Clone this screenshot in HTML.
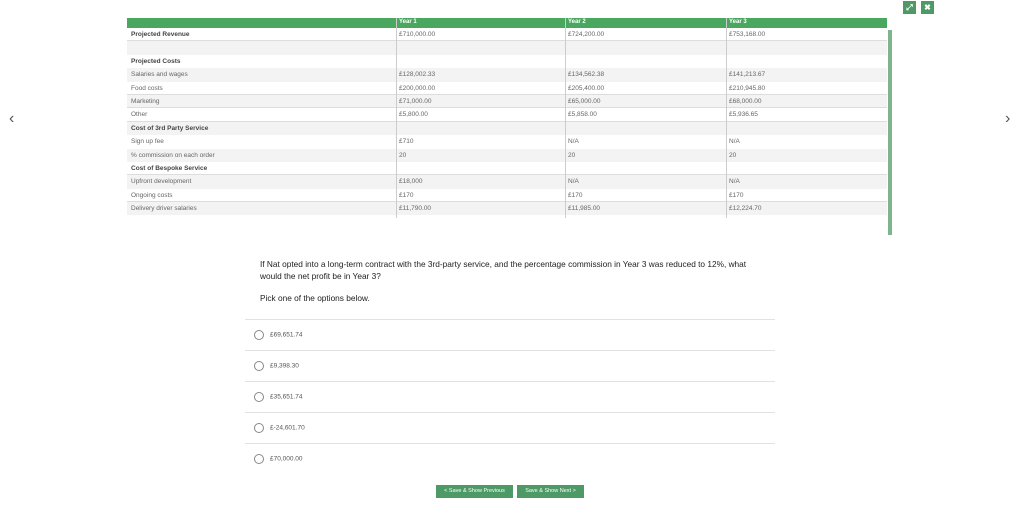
<!DOCTYPE html>
<html><head><style>
body{margin:0;width:1024px;height:514px;background:#fff;font-family:"Liberation Sans",sans-serif;position:relative;overflow:hidden;color:#333}
.tbl{position:absolute;left:127px;top:18px;width:760px}
.hdr{height:10px;background:#49a75f;position:relative}
.hdr span{position:absolute;top:0;font-size:6px;font-weight:bold;color:#fff;line-height:9px}
.row{box-sizing:border-box;height:13.4px;position:relative;font-size:6.5px;line-height:13px;color:#666}
.row:nth-child(even){background:#f3f3f3}
.row span{position:absolute;top:0}
.row b{position:absolute;left:4px;color:#444}
.vl{position:absolute;width:1px;background:#ccc;top:18px;height:200px}
.hl{border-bottom:1px solid #ddd}
.q{position:absolute;left:260px;font-size:8.3px;color:#222;line-height:11.5px;white-space:nowrap}
.line{position:absolute;left:245px;width:530px;height:1px;background:#e2e2e2}
.opt{position:absolute;left:254px;font-size:6.5px;color:#555}
.opt i{display:inline-block;width:8px;height:8px;border:1px solid #888;border-radius:50%;vertical-align:middle;margin-right:6px}
.btn{position:absolute;top:485px;height:13px;background:#4d9a66;color:#fff;font-size:5.5px;line-height:13px;text-align:center}
.ic{position:absolute;top:1px;width:13px;height:13px;background:#4d9a66;color:#fff;font-size:8px;line-height:13px;text-align:center;font-weight:bold}
</style></head><body>
<div class="tbl">
<div class="hdr"><span style="left:272px">Year 1</span><span style="left:441px">Year 2</span><span style="left:602px">Year 3</span></div>
<div>
<div class="row hl"><b>Projected Revenue</b><span style="left:272px">£710,000.00</span><span style="left:441px">£724,200.00</span><span style="left:602px">£753,168.00</span></div>
<div class="row"></div>
<div class="row"><b>Projected Costs</b></div>
<div class="row"><span style="left:4px">Salaries and wages</span><span style="left:272px">£128,002.33</span><span style="left:441px">£134,562.38</span><span style="left:602px">£141,213.67</span></div>
<div class="row hl"><span style="left:4px">Food costs</span><span style="left:272px">£200,000.00</span><span style="left:441px">£205,400.00</span><span style="left:602px">£210,945.80</span></div>
<div class="row hl"><span style="left:4px">Marketing</span><span style="left:272px">£71,000.00</span><span style="left:441px">£65,000.00</span><span style="left:602px">£68,000.00</span></div>
<div class="row hl"><span style="left:4px">Other</span><span style="left:272px">£5,800.00</span><span style="left:441px">£5,858.00</span><span style="left:602px">£5,936.65</span></div>
<div class="row"><b>Cost of 3rd Party Service</b></div>
<div class="row"><span style="left:4px">Sign up fee</span><span style="left:272px">£710</span><span style="left:441px">N/A</span><span style="left:602px">N/A</span></div>
<div class="row"><span style="left:4px">% commission on each order</span><span style="left:272px">20</span><span style="left:441px">20</span><span style="left:602px">20</span></div>
<div class="row hl"><b>Cost of Bespoke Service</b></div>
<div class="row"><span style="left:4px">Upfront development</span><span style="left:272px">£18,000</span><span style="left:441px">N/A</span><span style="left:602px">N/A</span></div>
<div class="row hl"><span style="left:4px">Ongoing costs</span><span style="left:272px">£170</span><span style="left:441px">£170</span><span style="left:602px">£170</span></div>
<div class="row"><span style="left:4px">Delivery driver salaries</span><span style="left:272px">£11,790.00</span><span style="left:441px">£11,985.00</span><span style="left:602px">£12,224.70</span></div>
</div></div>
<div class="vl" style="left:396px"></div><div class="vl" style="left:565px"></div><div class="vl" style="left:726px"></div>
<div style="position:absolute;left:888px;top:30px;width:4px;height:205px;background:#7fb48e"></div>
<div class="ic" style="left:903px">⤢</div><div class="ic" style="left:921px">✖</div>
<div style="position:absolute;left:9px;top:110px;font-size:16px;color:#555">‹</div>
<div style="position:absolute;left:1005px;top:110px;font-size:16px;color:#555">›</div>
<div class="q" style="top:259px">If Nat opted into a long-term contract with the 3rd-party service, and the percentage commission in Year 3 was reduced to 12%, what<br>would the net profit be in Year 3?</div>
<div class="q" style="top:293px">Pick one of the options below.</div>
<div class="line" style="top:319px"></div><div class="line" style="top:350px"></div><div class="line" style="top:381px"></div><div class="line" style="top:412px"></div><div class="line" style="top:443px"></div>
<div class="opt" style="top:330px"><i></i>£69,651.74</div>
<div class="opt" style="top:361px"><i></i>£9,398.30</div>
<div class="opt" style="top:392px"><i></i>£35,651.74</div>
<div class="opt" style="top:423px"><i></i>£-24,601.70</div>
<div class="opt" style="top:454px"><i></i>£70,000.00</div>
<div class="btn" style="left:436px;width:77px">&lt; Save &amp; Show Previous</div>
<div class="btn" style="left:517px;width:67px">Save &amp; Show Next &gt;</div>
</body></html>
